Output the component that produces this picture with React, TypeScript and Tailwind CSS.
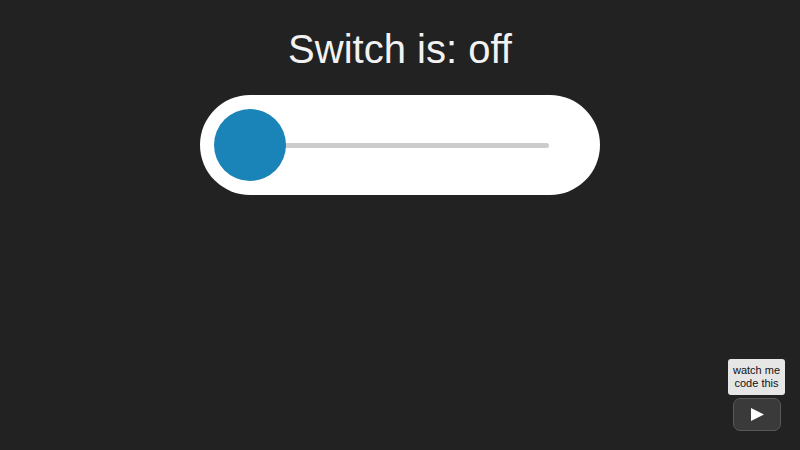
import { useState } from 'react'

// track runs from under the knob to near the right end of the pill
function Toggle({ on, onToggle }: { on: boolean; onToggle: () => void }) {
  return (
    <button
      type="button"
      onClick={onToggle}
      className="relative flex items-center w-[400px] h-[100px] rounded-full bg-white pl-[14px] pr-[51px]"
    >
      <span className="absolute left-[50px] right-[51px] top-[48px] h-[5px] rounded-full bg-[#cccccc]" />
      <span
        className={
          on
            ? 'relative ml-auto w-[72px] h-[72px] rounded-full bg-[#1a83b7]'
            : 'relative w-[72px] h-[72px] rounded-full bg-[#1a83b7]'
        }
      />
    </button>
  )
}

export default function App() {
  const [on, setOn] = useState(false)

  return (
    <div className="relative h-[450px] w-full bg-[#222222] font-['Liberation_Sans',Arial,sans-serif] overflow-hidden">
      <div className="flex flex-col items-center pt-[29px] gap-[26px]">
        <h1 className="text-[40px] leading-[40px] text-[#f2f2f2]">
          Switch is: {on ? 'on' : 'off'}
        </h1>
        <Toggle on={on} onToggle={() => setOn(!on)} />
      </div>

      <div className="absolute right-[15px] bottom-[19px] flex flex-col items-center gap-[3px]">
        <div className="w-[57px] h-[36px] rounded-[3px] bg-[#e6e6e6] flex flex-col items-center justify-center text-[11px] leading-[13px] text-[#111]">
          <span>watch me</span>
          <span>code this</span>
        </div>
        <button
          type="button"
          className="w-[48px] h-[33px] rounded-[7px] bg-[#3a3a3a] border border-[#585858] flex items-center justify-center pl-[2px]"
        >
          <svg width="15" height="15" viewBox="0 0 15 15">
            <path d="M1 1 L14 7.5 L1 14 Z" fill="#ffffff" />
          </svg>
        </button>
      </div>
    </div>
  )
}
